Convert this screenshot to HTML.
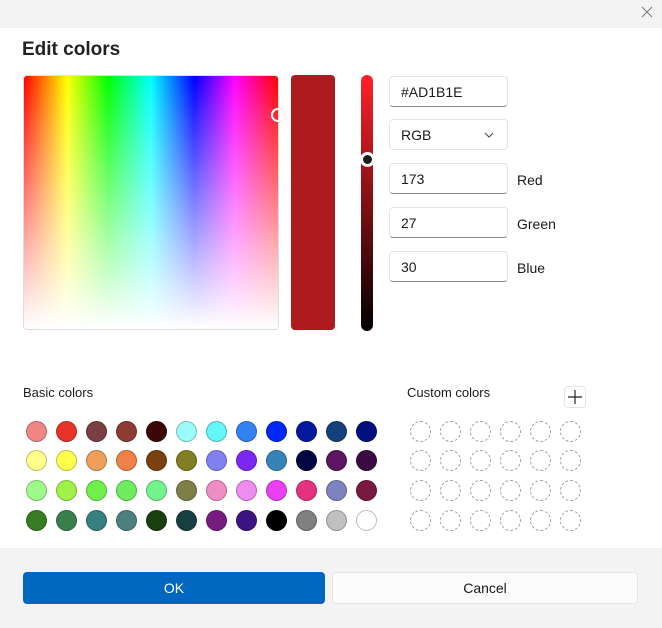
<!DOCTYPE html>
<html><head><style>
*{margin:0;padding:0;box-sizing:border-box}
body{width:662px;height:628px;position:relative;background:#fff;font-family:"Segoe UI","Liberation Sans",sans-serif;color:#1a1a1a;overflow:hidden}
.a{position:absolute}
.tb{left:0;top:0;width:662px;height:28px;background:#f3f3f3}
.ft{left:0;top:548px;width:662px;height:80px;background:#f3f3f3}
.inp{position:absolute;left:389px;width:119px;height:31px;background:#fff;border:1px solid #e5e5e5;border-bottom:1px solid #8a8a8a;border-radius:4px;font-size:14px;padding:7px 0 0 11px}
.lbl{position:absolute;left:517px;font-size:14px}
.c{position:absolute;width:21px;height:21px;border-radius:50%;border:1px solid rgba(0,0,0,.25)}
.d{position:absolute;width:21px;height:21px;border-radius:50%;border:1px dashed #a0a0a0}
</style></head><body>
<div class="a tb"></div>
<svg class="a" style="left:641px;top:6px" width="12" height="12"><path d="M1 1L11 11M11 1L1 11" stroke="#777" stroke-width="1"/></svg>
<div class="a" style="left:22px;top:39px;font-size:19px;font-weight:600;color:#222">Edit colors</div>
<div class="a" style="left:23px;top:75px;width:256px;height:255px;border-radius:4px;background:linear-gradient(to bottom,rgba(255,255,255,0),#fff),linear-gradient(to right,#f00,#ff0 17%,#0f0 33%,#0ff 50%,#00f 67%,#f0f 83%,#f00);border:1px solid #ddd"></div>
<div class="a" style="left:271px;top:108px;width:14px;height:14px;border-radius:50%;border:2px solid #fff;box-shadow:0 0 1px #888"></div>
<div class="a" style="left:291px;top:75px;width:44px;height:255px;background:#AD1B1E;border-radius:4px"></div>
<div class="a" style="left:361px;top:75px;width:12px;height:256px;border-radius:6px;background:linear-gradient(#ff2027,#000)"></div>
<div class="a" style="left:360px;top:152px;width:15px;height:15px;border-radius:50%;background:#1c1c1c;border:3px solid #fff"></div>
<div class="inp" style="top:76px">#AD1B1E</div>
<div class="inp" style="top:119px;border-bottom:1px solid #e5e5e5">RGB<svg style="position:absolute;left:94px;top:12px" width="10" height="6"><path d="M1 1L5 5L9 1" stroke="#444" fill="none"/></svg></div>
<div class="inp" style="top:163px">173</div><div class="lbl" style="top:172px">Red</div>
<div class="inp" style="top:207px">27</div><div class="lbl" style="top:216px">Green</div>
<div class="inp" style="top:251px">30</div><div class="lbl" style="top:260px">Blue</div>
<div class="a" style="left:23px;top:385px;font-size:13px">Basic colors</div>
<div class="a" style="left:407px;top:385px;font-size:13px">Custom colors</div>
<div class="a" style="left:564px;top:386px;width:22px;height:22px;border:1px solid #e5e5e5;border-radius:4px"><svg width="20" height="20"><path d="M10 3V17M3 10H17" stroke="#222" stroke-width="1.2"/></svg></div>
<div id="g"></div>
<div class="a ft"></div>
<div class="a" style="left:23px;top:572px;width:302px;height:32px;background:#0067c0;border-radius:4px;color:#fff;font-size:14px;text-align:center;line-height:32px">OK</div>
<div class="a" style="left:332px;top:572px;width:306px;height:32px;background:#fbfbfb;border:1px solid #e5e5e5;border-radius:4px;font-size:14px;text-align:center;line-height:30px">Cancel</div>
<script>
var cs=["#EF8686","#E83328","#7A3F3F","#8E3B33","#3E0707","#9BFBFB","#65F7F7","#3282F0","#0027F5","#03189C","#14417C","#020F7F",
"#FFFF8A","#FFFF4D","#F09E5C","#EE8048","#7B4010","#827E24","#8080F0","#7D27F2","#3783B8","#020643","#5B1562","#3A0A41",
"#9DFB8C","#9FF248","#71F04C","#6EEC5E","#73F38C","#7E7E49","#EE8DC3","#EE8CEF","#EA3FF5","#E5327F","#7E82BE","#781940",
"#387D24","#397F4B","#387F80","#4C7F7E","#183F0D","#173F3F","#781C7F","#3C1383","#000000","#808080","#C0C0C0","#FFFFFF"];
var h="",ys=[421,450,480,510];
for(var r=0;r<4;r++){for(var i=0;i<12;i++)h+='<div class="c" style="left:'+(26+i*30)+'px;top:'+ys[r]+'px;background:'+cs[r*12+i]+'"></div>';
for(var j=0;j<6;j++)h+='<div class="d" style="left:'+(410+j*30)+'px;top:'+ys[r]+'px"></div>';}
document.getElementById('g').innerHTML=h;
</script>
</body></html>
